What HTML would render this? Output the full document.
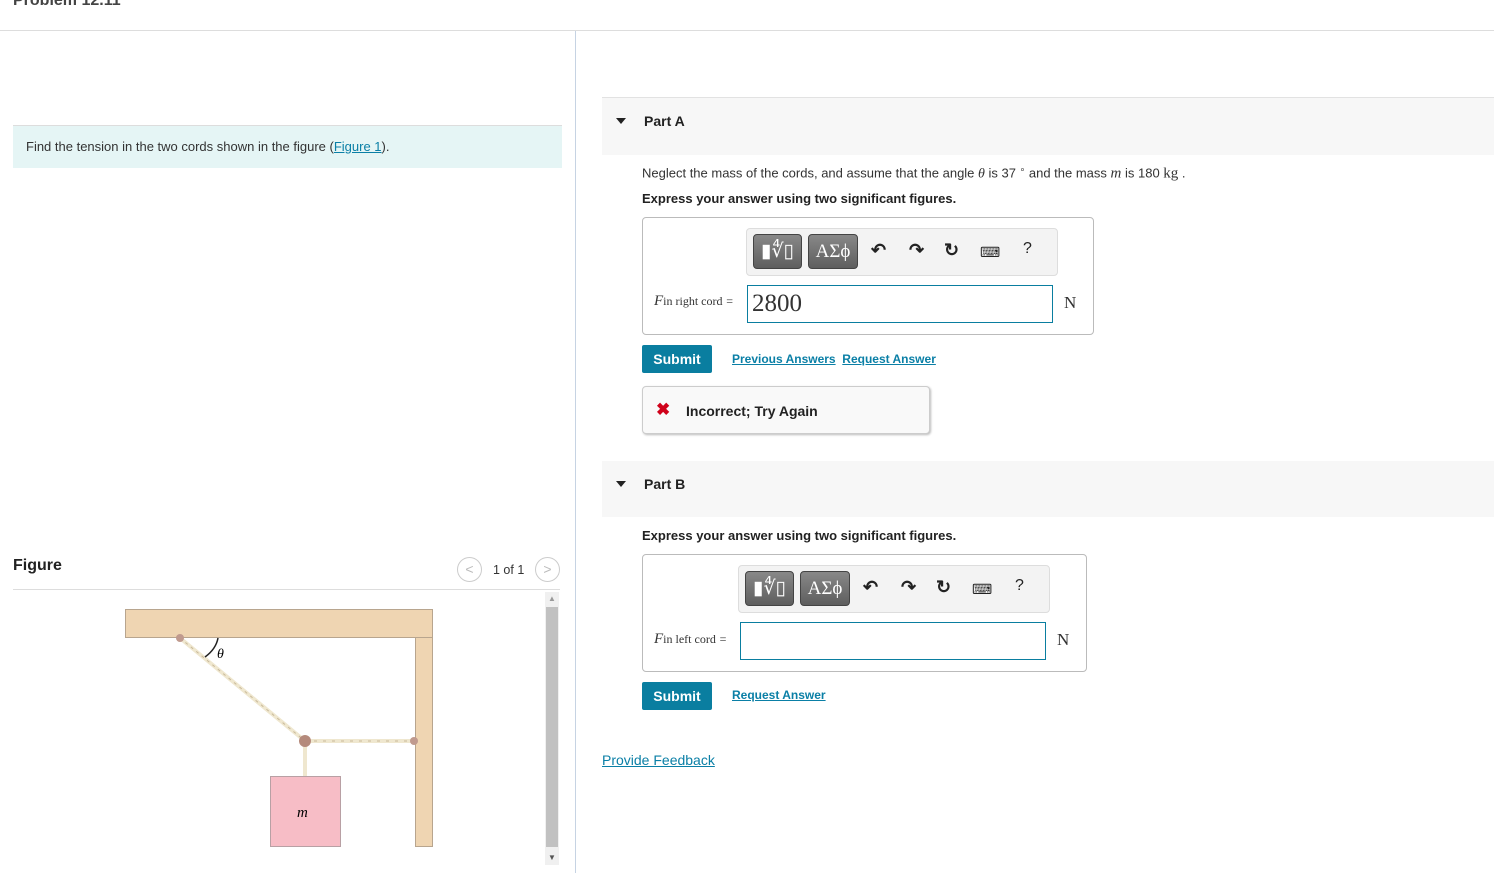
<!DOCTYPE html>
<html><head><style>
body{margin:0;width:1494px;height:873px;position:relative;overflow:hidden;background:#fff;font-family:"Liberation Sans",sans-serif;color:#333}
.a{position:absolute}
a{color:#0a7fa6}
.tb{background:#f3f3f3;border:1px solid #ddd;border-radius:4px}
.btn{position:absolute;top:5px;height:33px;border:1px solid #444;border-radius:4px;background:linear-gradient(#888,#5e5e5e);color:#fff;font-family:"Liberation Serif",serif;font-size:19px;text-align:center;line-height:33px}
.ic{position:absolute;top:11px;font-size:18px;color:#222;font-weight:bold}
.sub{background:#0a7ea0;color:#fff;font-size:14px;font-weight:bold;text-align:center;line-height:28px;border-radius:2px}
.ser{font-family:"Liberation Serif",serif}
.tri{position:absolute;width:0;height:0;border-left:5px solid transparent;border-right:5px solid transparent;border-top:6px solid #222}
</style></head><body>
<div class="a" style="left:13px;top:-8px;font-size:16px;font-weight:bold;color:#444">Problem 12.11</div>
<div class="a" style="left:0;top:30px;width:1494px;height:1px;background:#ddd"></div>
<div class="a" style="left:575px;top:31px;width:1px;height:842px;background:#c6d3e3"></div>
<div class="a" style="left:13px;top:125px;width:549px;height:42px;background:#e5f5f5;border-top:1px solid #ddd;font-size:13px;line-height:42px;text-indent:13px;color:#333">Find the tension in the two cords shown in the figure (<a href="#">Figure 1</a>).</div>
<div class="a" style="left:13px;top:557px;font-size:16px;font-weight:bold;color:#222">Figure</div>
<div class="a" style="left:457px;top:557px;width:23px;height:23px;border:1px solid #ccc;border-radius:50%;color:#bbb;text-align:center;line-height:22px;font-size:14px">&lt;</div>
<div class="a" style="left:493px;top:563px;font-size:12.5px">1 of 1</div>
<div class="a" style="left:535px;top:557px;width:23px;height:23px;border:1px solid #ccc;border-radius:50%;color:#bbb;text-align:center;line-height:22px;font-size:14px">&gt;</div>
<div class="a" style="left:13px;top:589px;width:547px;height:1px;background:#ddd"></div>
<div class="a" style="left:545px;top:592px;width:14px;height:273px;background:#f0f0f0"></div>
<div class="a" style="left:546px;top:607px;width:12px;height:240px;background:#c1c1c1"></div>
<div class="a" style="left:548px;top:594px;font-size:8px;color:#999">▲</div>
<div class="a" style="left:548px;top:853px;font-size:8px;color:#555">▼</div>
<svg class="a" style="left:110px;top:595px" width="340" height="260">
<rect x="15.5" y="14.5" width="307" height="28" fill="#efd5b2" stroke="#b8a58e"/>
<rect x="305.5" y="42.5" width="17" height="209" fill="#efd5b2" stroke="#b8a58e"/>
<line x1="70" y1="43" x2="195" y2="146" stroke="#efe7cf" stroke-width="4"/>
<line x1="70" y1="43" x2="195" y2="146" stroke="#c9b99a" stroke-width="1" stroke-dasharray="3 4"/>
<line x1="195" y1="146" x2="304" y2="146" stroke="#efe7cf" stroke-width="4"/>
<line x1="195" y1="146" x2="304" y2="146" stroke="#c9b99a" stroke-width="1" stroke-dasharray="3 6"/>
<line x1="195" y1="146" x2="195" y2="181" stroke="#efe7cf" stroke-width="4"/>
<circle cx="70" cy="43" r="4" fill="#c09a8e"/>
<circle cx="195" cy="146" r="6" fill="#b58a7c"/>
<circle cx="304" cy="146" r="4" fill="#c09a8e"/>
<path d="M108 43 Q106 54 95 62" fill="none" stroke="#222" stroke-width="1.5"/>
<text x="107" y="63" font-family="Liberation Serif" font-style="italic" font-size="14">θ</text>
<rect x="160.5" y="181.5" width="70" height="70" fill="#f7bdc6" stroke="#b8a0a4"/>
<text x="187" y="222" font-family="Liberation Serif" font-style="italic" font-size="15">m</text>
</svg>

<div class="a" style="left:602px;top:97px;width:892px;height:57px;background:#f7f7f7;border-top:1px solid #e2e2e2"></div>
<div class="tri" style="left:616px;top:118px"></div>
<div class="a" style="left:644px;top:113px;font-size:14px;font-weight:bold;color:#222">Part A</div>
<div class="a" style="left:642px;top:164px;font-size:13px">Neglect the mass of the cords, and assume that the angle <i class="ser" style="font-size:14px">θ</i> is 37 <sup style="font-size:9px">∘</sup> and the mass <i class="ser" style="font-size:15px">m</i> is 180 <span class="ser" style="font-size:15px">kg</span> .</div>
<div class="a" style="left:642px;top:191px;font-size:13px;font-weight:bold;color:#222">Express your answer using two significant figures.</div>
<div class="a" style="left:642px;top:217px;width:450px;height:116px;border:1px solid #bbb;border-radius:4px"></div>
<div class="a tb" style="left:746px;top:228px;width:310px;height:46px">
<div class="btn" style="left:6px;width:47px">▮∜▯</div>
<div class="btn" style="left:61px;width:48px">ΑΣϕ</div>
<div class="ic" style="left:124px">↶</div><div class="ic" style="left:162px">↷</div><div class="ic" style="left:197px">↻</div><div class="ic" style="left:233px;font-size:14px;top:15px;font-weight:normal">⌨</div><div class="ic" style="left:276px;font-size:16px;font-weight:normal">?</div>
</div>
<div class="a ser" style="left:654px;top:293px;font-size:15px"><i>F</i><span style="font-size:12px">in right cord</span> <span style="font-size:12px">=</span></div>
<div class="a ser" style="left:747px;top:285px;width:304px;height:36px;border:1px solid #0a7ea0;font-size:25px;line-height:36px;text-indent:4px;color:#333">2800</div>
<div class="a ser" style="left:1064px;top:293px;font-size:17px">N</div>
<div class="a sub" style="left:642px;top:345px;width:70px;height:28px">Submit</div>
<div class="a" style="left:732px;top:352px;font-size:12px;font-weight:bold"><a href="#">Previous Answers</a>&nbsp; <a href="#">Request Answer</a></div>
<div class="a" style="left:642px;top:386px;width:286px;height:46px;border:1px solid #ccc;border-radius:4px;background:#f9f9f9;box-shadow:1px 1px 2px #bbb"></div>
<div class="a" style="left:656px;top:400px;color:#d0021b;font-size:17px;font-weight:bold">✖</div>
<div class="a" style="left:686px;top:403px;font-size:14px;font-weight:bold;color:#222">Incorrect; Try Again</div>

<div class="a" style="left:602px;top:461px;width:892px;height:56px;background:#f7f7f7"></div>
<div class="tri" style="left:616px;top:481px"></div>
<div class="a" style="left:644px;top:476px;font-size:14px;font-weight:bold;color:#222">Part B</div>
<div class="a" style="left:642px;top:528px;font-size:13px;font-weight:bold;color:#222">Express your answer using two significant figures.</div>
<div class="a" style="left:642px;top:554px;width:443px;height:116px;border:1px solid #bbb;border-radius:4px"></div>
<div class="a tb" style="left:738px;top:565px;width:310px;height:46px">
<div class="btn" style="left:6px;width:47px">▮∜▯</div>
<div class="btn" style="left:61px;width:48px">ΑΣϕ</div>
<div class="ic" style="left:124px">↶</div><div class="ic" style="left:162px">↷</div><div class="ic" style="left:197px">↻</div><div class="ic" style="left:233px;font-size:14px;top:15px;font-weight:normal">⌨</div><div class="ic" style="left:276px;font-size:16px;font-weight:normal">?</div>
</div>
<div class="a ser" style="left:654px;top:631px;font-size:15px"><i>F</i><span style="font-size:12px">in left cord</span> <span style="font-size:12px">=</span></div>
<div class="a" style="left:740px;top:622px;width:304px;height:36px;border:1px solid #0a7ea0"></div>
<div class="a ser" style="left:1057px;top:630px;font-size:17px">N</div>
<div class="a sub" style="left:642px;top:682px;width:70px;height:28px">Submit</div>
<div class="a" style="left:732px;top:688px;font-size:12px;font-weight:bold"><a href="#">Request Answer</a></div>
<div class="a" style="left:602px;top:752px;font-size:14px"><a href="#">Provide Feedback</a></div>
</body></html>
